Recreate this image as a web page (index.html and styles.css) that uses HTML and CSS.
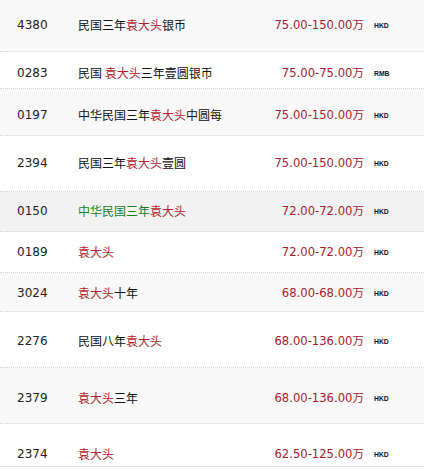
FILE: index.html
```html
<!DOCTYPE html>
<html lang="zh-CN">
<head>
<meta charset="utf-8">
<title>袁大头</title>
<link rel="stylesheet" href="styles.css">
</head>
<body>
<ul class="list">
  <li class="row alt"><span class="code">4380</span><span class="name">民国三年<em>袁大头</em>银币</span><span class="price">75.00-150.00万</span><span class="cur">HKD</span></li>
  <li class="row"><span class="code">0283</span><span class="name">民国 <em>袁大头</em>三年壹圆银币</span><span class="price">75.00-75.00万</span><span class="cur">RMB</span></li>
  <li class="row alt"><span class="code">0197</span><span class="name">中华民国三年<em>袁大头</em>中圆每</span><span class="price">75.00-150.00万</span><span class="cur">HKD</span></li>
  <li class="row"><span class="code">2394</span><span class="name">民国三年<em>袁大头</em>壹圆</span><span class="price">75.00-150.00万</span><span class="cur">HKD</span></li>
  <li class="row hover"><span class="code">0150</span><span class="name green">中华民国三年<em>袁大头</em></span><span class="price">72.00-72.00万</span><span class="cur">HKD</span></li>
  <li class="row"><span class="code">0189</span><span class="name"><em>袁大头</em></span><span class="price">72.00-72.00万</span><span class="cur">HKD</span></li>
  <li class="row alt"><span class="code">3024</span><span class="name"><em>袁大头</em>十年</span><span class="price">68.00-68.00万</span><span class="cur">HKD</span></li>
  <li class="row"><span class="code">2276</span><span class="name">民国八年<em>袁大头</em></span><span class="price">68.00-136.00万</span><span class="cur">HKD</span></li>
  <li class="row alt"><span class="code">2379</span><span class="name"><em>袁大头</em>三年</span><span class="price">68.00-136.00万</span><span class="cur">HKD</span></li>
  <li class="row last"><span class="code">2374</span><span class="name"><em>袁大头</em></span><span class="price">62.50-125.00万</span><span class="cur">HKD</span></li>
</ul>
</body>
</html>
```
FILE: styles.css
```css
html, body {
  margin: 0;
  padding: 0;
  background: #fff;
}
body {
  font-family: "DejaVu Sans", Verdana, sans-serif;
  font-size: 12px;
  color: #333;
}
.list {
  list-style: none;
  margin: 0;
  padding: 0;
  width: 424px;
}
.row {
  display: flex;
  align-items: flex-start;
  box-sizing: border-box;
  padding-left: 17px;
  border-bottom: 1px dotted #d6d6d6;
  line-height: 16px;
  background: #fff;
}
.row.alt { background: #f9f9f9; }
.row.hover { background: #f2f2f2; }
.row.last { border-bottom: 1px solid #e3e3e3; }

.row:nth-child(1)  { height: 52px; padding-top: 17px; }
.row:nth-child(2)  { height: 37px; padding-top: 13px; }
.row:nth-child(3)  { height: 47px; padding-top: 18px; }
.row:nth-child(4)  { height: 56px; padding-top: 19px; }
.row:nth-child(5)  { height: 40px; padding-top: 11px; }
.row:nth-child(6)  { height: 41px; padding-top: 12px; }
.row:nth-child(7)  { height: 39px; padding-top: 12px; }
.row:nth-child(8)  { height: 56px; padding-top: 21px; }
.row:nth-child(9)  { height: 56px; padding-top: 22px; }
.row:nth-child(10) { height: 43px; padding-top: 22px; }

.code {
  width: 61px;
  flex: none;
  color: #222;
}
.name {
  flex: 1;
  font-family: "Noto Sans CJK SC", "DejaVu Sans", sans-serif;
  font-size: 12px;
  color: #111;
  white-space: nowrap;
}
.name em {
  font-style: normal;
  color: #b3232b;
}
.name.green { color: #1c7d1c; }
.price {
  flex: none;
  text-align: right;
  color: #a8202c;
  font-size: 11.6px;
  white-space: nowrap;
}
.price, .price * { font-family: "DejaVu Sans", "Noto Sans CJK SC", sans-serif; }
.cur {
  flex: none;
  width: 50px;
  margin-left: 10px;
  font-family: "Liberation Sans", Arial, sans-serif;
  font-weight: bold;
  font-size: 6.8px;
  color: #111;
  padding-top: 1px;
}
```
